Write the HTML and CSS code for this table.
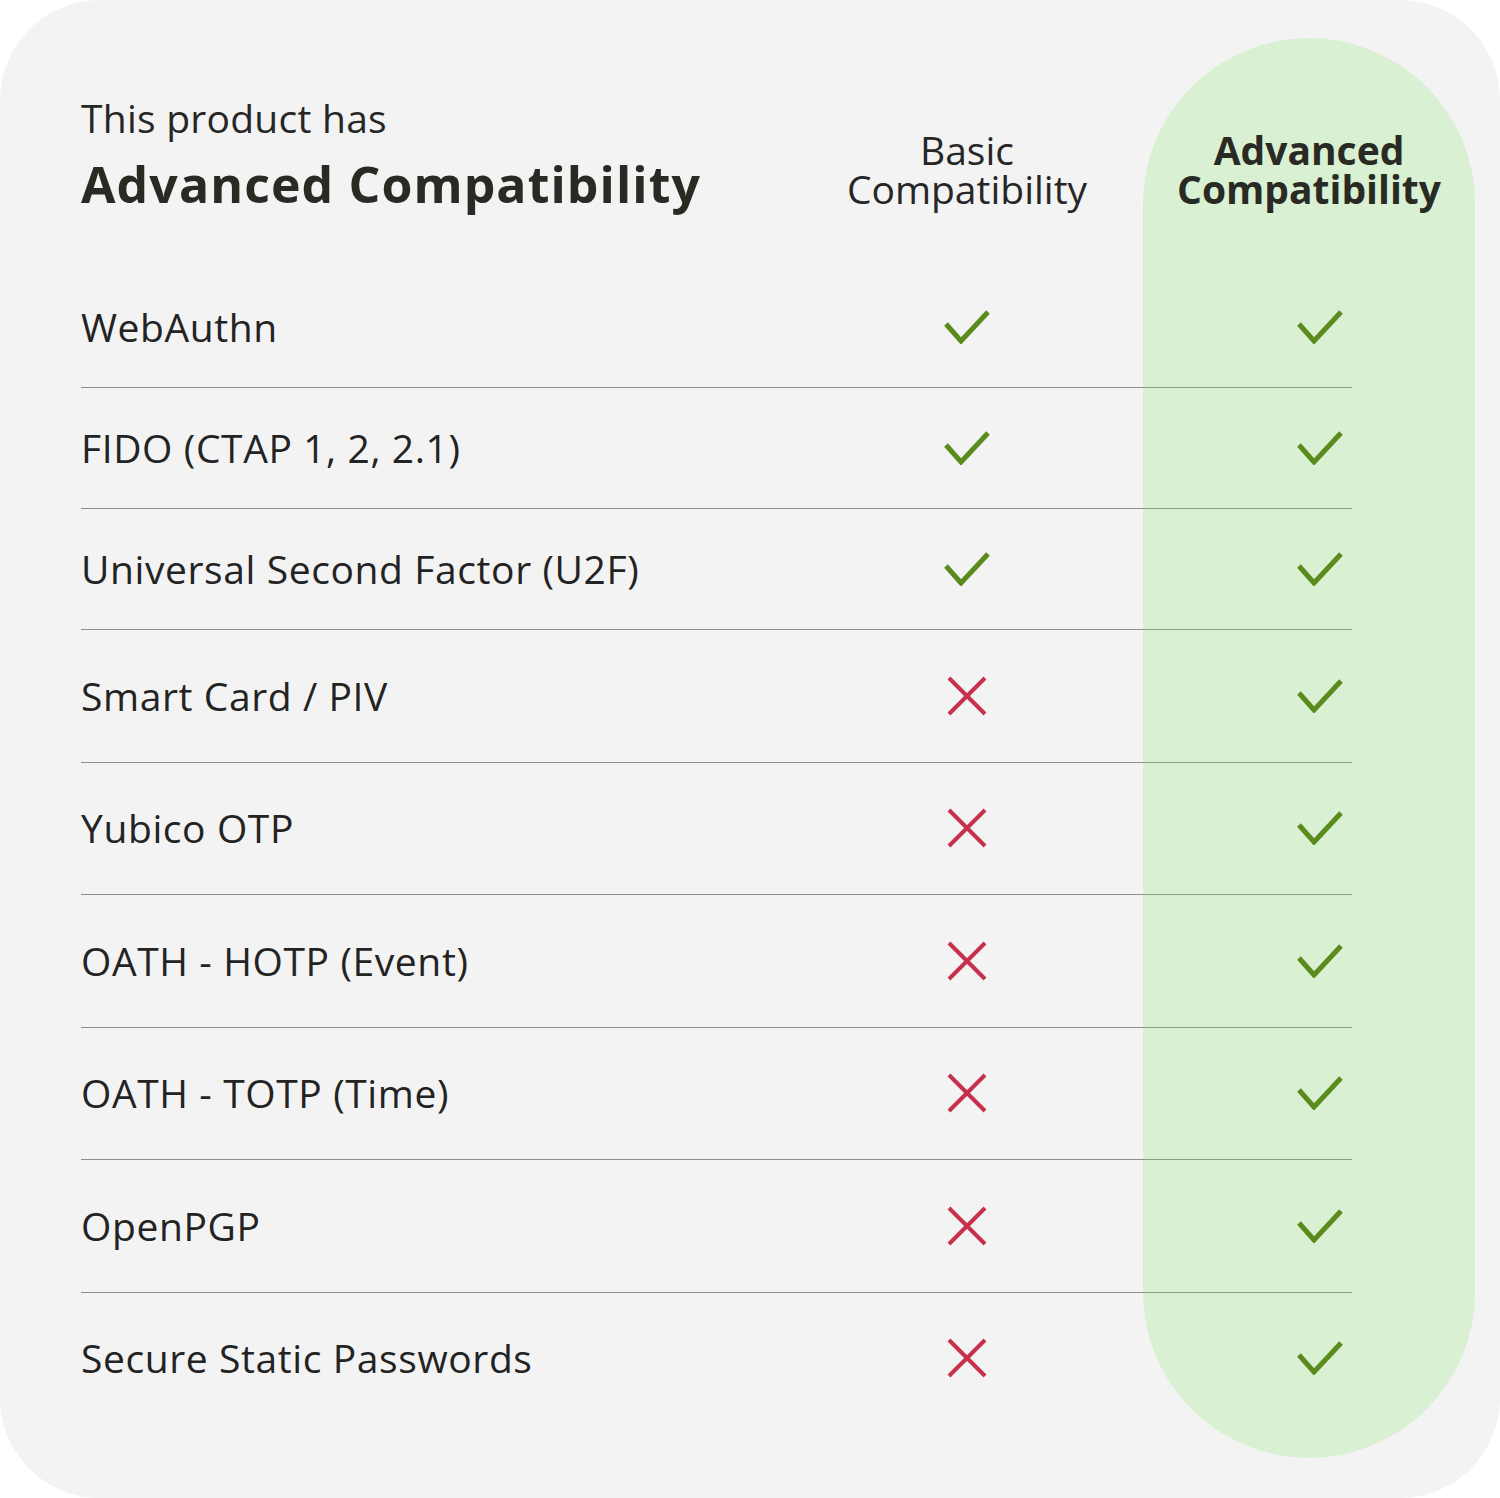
FILE: index.html
```html
<!DOCTYPE html>
<html lang="en">
<head>
<meta charset="utf-8">
<title>Compatibility</title>
<link rel="stylesheet" href="styles.css">
</head>
<body>
<div class="card">
  <div class="main">
    <div class="head">
      <div class="title">
        <div class="title-sub">This product has</div>
        <div class="title-main">Advanced Compatibility</div>
      </div>
      <div class="col-head">Basic<br>Compatibility</div>
    </div>
    <div class="row"><div class="label">WebAuthn</div><div class="mark"><svg class="chk" viewBox="0 0 46 34"><polyline points="2,14 17,31 44,2"/></svg></div></div>
    <div class="row"><div class="label">FIDO (CTAP 1, 2, 2.1)</div><div class="mark"><svg class="chk" viewBox="0 0 46 34"><polyline points="2,14 17,31 44,2"/></svg></div></div>
    <div class="row"><div class="label">Universal Second Factor (U2F)</div><div class="mark"><svg class="chk" viewBox="0 0 46 34"><polyline points="2,14 17,31 44,2"/></svg></div></div>
    <div class="row tall"><div class="label">Smart Card / PIV</div><div class="mark"><svg class="crs" viewBox="0 0 40 40"><path d="M2 2 L38 38 M38 2 L2 38"/></svg></div></div>
    <div class="row tall"><div class="label">Yubico OTP</div><div class="mark"><svg class="crs" viewBox="0 0 40 40"><path d="M2 2 L38 38 M38 2 L2 38"/></svg></div></div>
    <div class="row tall"><div class="label">OATH - HOTP (Event)</div><div class="mark"><svg class="crs" viewBox="0 0 40 40"><path d="M2 2 L38 38 M38 2 L2 38"/></svg></div></div>
    <div class="row tall"><div class="label">OATH - TOTP (Time)</div><div class="mark"><svg class="crs" viewBox="0 0 40 40"><path d="M2 2 L38 38 M38 2 L2 38"/></svg></div></div>
    <div class="row tall"><div class="label">OpenPGP</div><div class="mark"><svg class="crs" viewBox="0 0 40 40"><path d="M2 2 L38 38 M38 2 L2 38"/></svg></div></div>
    <div class="row tall last"><div class="label">Secure Static Passwords</div><div class="mark"><svg class="crs" viewBox="0 0 40 40"><path d="M2 2 L38 38 M38 2 L2 38"/></svg></div></div>
  </div>
  <div class="adv">
    <div class="adv-head">Advanced<br>Compatibility</div>
    <div class="acell"><svg class="chk" viewBox="0 0 46 34"><polyline points="2,14 17,31 44,2"/></svg></div>
    <div class="acell"><svg class="chk" viewBox="0 0 46 34"><polyline points="2,14 17,31 44,2"/></svg></div>
    <div class="acell"><svg class="chk" viewBox="0 0 46 34"><polyline points="2,14 17,31 44,2"/></svg></div>
    <div class="acell tall"><svg class="chk" viewBox="0 0 46 34"><polyline points="2,14 17,31 44,2"/></svg></div>
    <div class="acell tall"><svg class="chk" viewBox="0 0 46 34"><polyline points="2,14 17,31 44,2"/></svg></div>
    <div class="acell tall"><svg class="chk" viewBox="0 0 46 34"><polyline points="2,14 17,31 44,2"/></svg></div>
    <div class="acell tall"><svg class="chk" viewBox="0 0 46 34"><polyline points="2,14 17,31 44,2"/></svg></div>
    <div class="acell tall"><svg class="chk" viewBox="0 0 46 34"><polyline points="2,14 17,31 44,2"/></svg></div>
    <div class="acell tall last"><svg class="chk" viewBox="0 0 46 34"><polyline points="2,14 17,31 44,2"/></svg></div>
  </div>
</div>
</body>
</html>
```

FILE: styles.css
```css
* { box-sizing: border-box; }
html, body { margin: 0; padding: 0; background: #ffffff; }
body {
  font-family: "Open Sans", "Noto Sans", "Liberation Sans", sans-serif;
  color: #232323;
}
.card {
  width: 1500px;
  height: 1498px;
  border-radius: 100px;
  background: #f3f3f3;
  display: flex;
  padding: 38px 25px 0 81px;
}
.main {
  width: 1062px;
  display: flex;
  flex-direction: column;
}
.head {
  height: 229px;
  display: grid;
  grid-template-columns: 721px 330px;
}
.title { padding-top: 57px; }
.title-sub {
  font-size: 39px;
  line-height: 46px;
  font-weight: 400;
  letter-spacing: 0.25px;
  color: #262626;
}
.title-main {
  margin-top: 10px;
  font-size: 50px;
  line-height: 66px;
  font-weight: 700;
  letter-spacing: 1.1px;
  color: #2a2a24;
}
.col-head {
  padding-top: 92px;
  text-align: center;
  font-size: 39px;
  line-height: 39px;
  font-weight: 400;
  color: #262626;
}
.row {
  height: 121px;
  display: grid;
  grid-template-columns: 721px 330px;
  align-items: center;
  border-bottom: 1px solid #8e8e8e;
}
.row.tall { height: 132.5px; }
.row.last { border-bottom: none; height: 130px; }
.label {
  font-size: 39px;
  line-height: 46px;
  letter-spacing: 0.6px;
  color: #232323;
}
.mark {
  display: flex;
  justify-content: center;
  align-items: center;
}
.adv {
  width: 332px;
  height: 1420px;
  background: #d9f0d3;
  border-radius: 166px;
  display: flex;
  flex-direction: column;
}
.adv-head {
  height: 229px;
  padding-top: 92px;
  text-align: center;
  font-size: 39px;
  line-height: 39px;
  font-weight: 700;
  color: #2a2a24;
}
.acell {
  height: 121px;
  margin-right: 123px;
  border-bottom: 1px solid #8e9a8a;
  display: flex;
  align-items: center;
  padding-left: 154px;
}
.acell.tall { height: 132.5px; }
.acell.last { border-bottom: none; height: 130px; }
.chk {
  width: 46px;
  height: 34px;
  fill: none;
  stroke: #5a8c1d;
  stroke-width: 5;
  stroke-linecap: butt;
  stroke-linejoin: miter;
}
.crs {
  width: 40px;
  height: 40px;
  fill: none;
  stroke: #c6304d;
  stroke-width: 4;
}
```
